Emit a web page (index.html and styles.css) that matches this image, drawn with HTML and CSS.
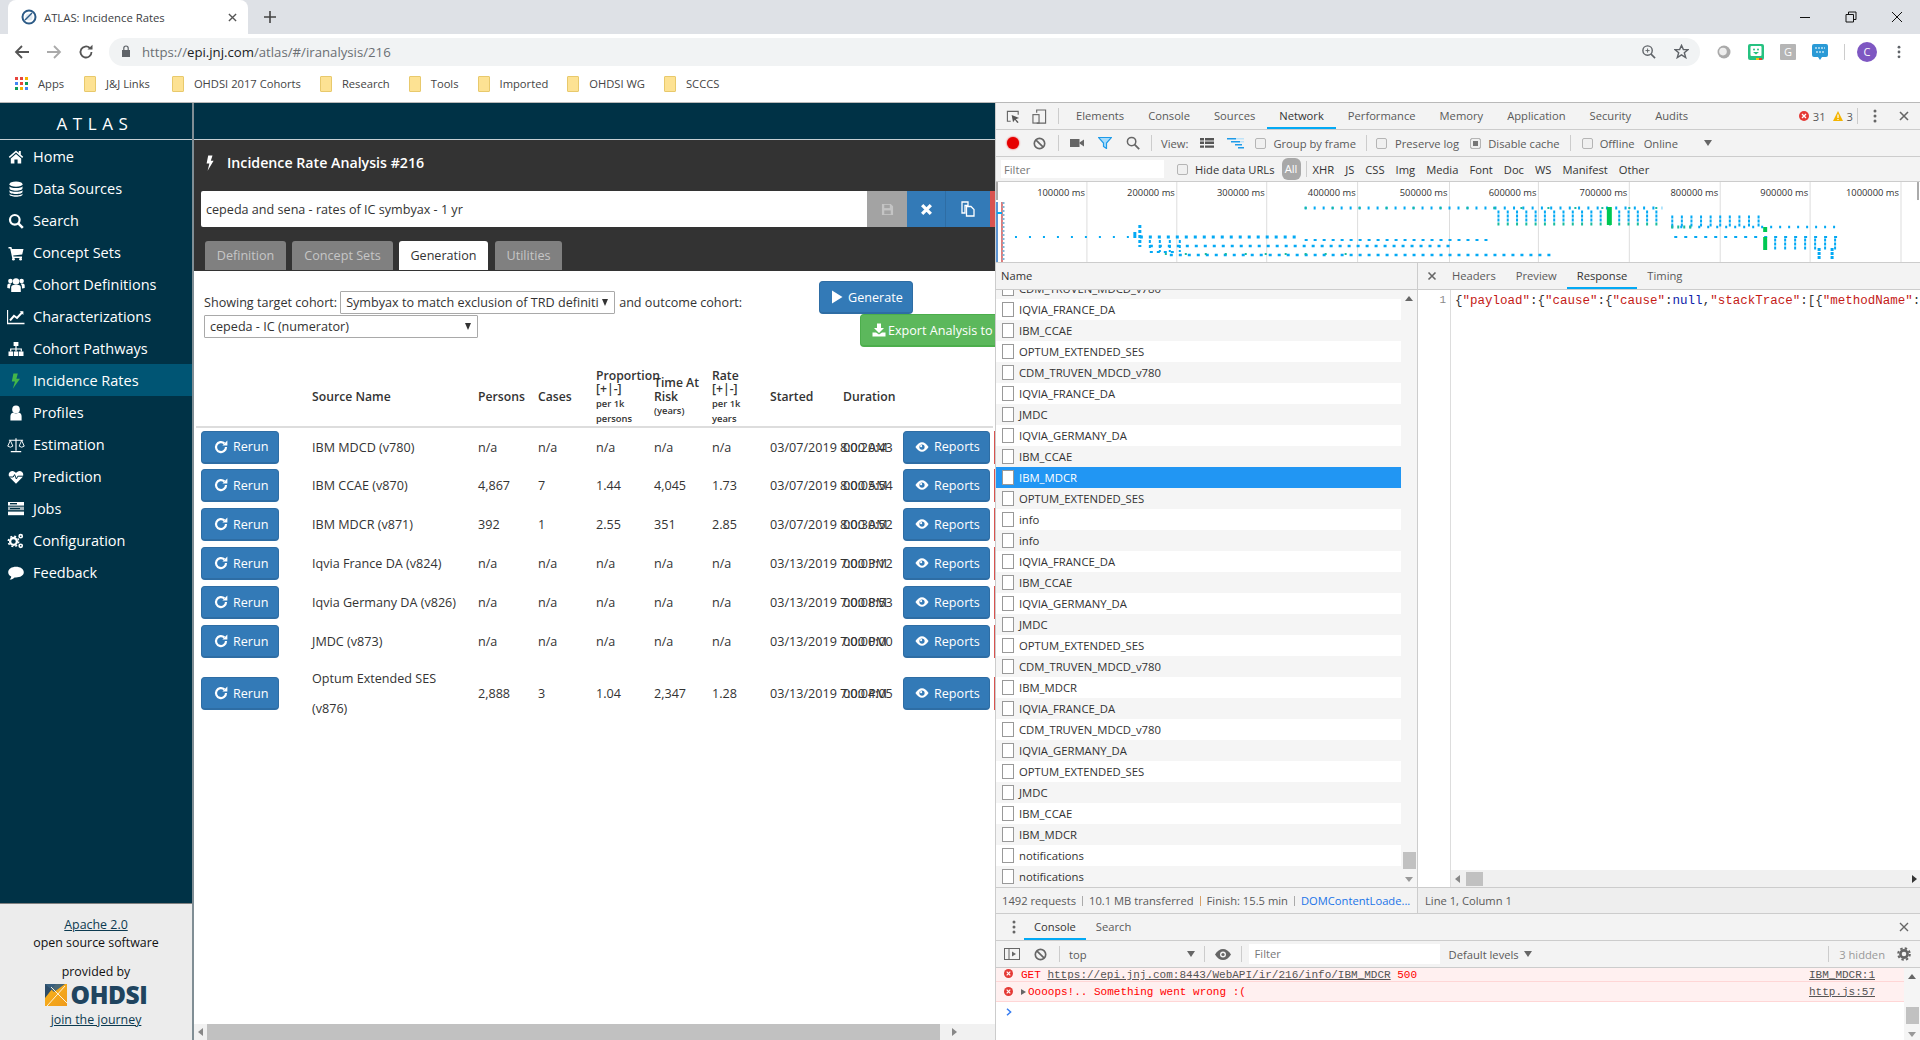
FILE: index.html
```html
<!DOCTYPE html>
<html lang="en">
<head>
<meta charset="utf-8">
<title>ATLAS: Incidence Rates</title>
<link rel="stylesheet" href="styles.css">
</head>
<body>
<header class="browser">
  <div class="tabstrip">
    <div class="tab">
      <svg class="favicon" viewBox="0 0 16 16"><circle cx="8" cy="8" r="6.5" fill="none" stroke="#2b5a86" stroke-width="2"/><circle cx="8" cy="8" r="3.6" fill="#dfe8f0"/><path d="M4 11 L11 4" stroke="#2b5a86" stroke-width="1.4"/></svg>
      <span class="tab-title">ATLAS: Incidence Rates</span>
      <svg class="tab-close" viewBox="0 0 10 10"><path d="M1 1L9 9M9 1L1 9" stroke="#555" stroke-width="1.5"/></svg>
    </div>
    <svg class="newtab" viewBox="0 0 12 12"><path d="M6 0V12M0 6H12" stroke="#444" stroke-width="1.6"/></svg>
    <div class="win-controls">
      <svg viewBox="0 0 12 12"><path d="M1 6.5H11" stroke="#111" stroke-width="1"/></svg>
      <svg viewBox="0 0 12 12"><path d="M3.5 3V1H11V8.5H9M1 3.5H8.5V11H1Z" fill="none" stroke="#111"/></svg>
      <svg viewBox="0 0 12 12"><path d="M1 1L11 11M11 1L1 11" stroke="#111"/></svg>
    </div>
  </div>
  <div class="toolbar">
    <svg class="nav-ic" viewBox="0 0 16 16"><path d="M15 8H2M8 2L2 8L8 14" fill="none" stroke="#555" stroke-width="1.8"/></svg>
    <svg class="nav-ic" viewBox="0 0 16 16"><path d="M1 8H14M8 2L14 8L8 14" fill="none" stroke="#aaa" stroke-width="1.8"/></svg>
    <svg class="nav-ic" viewBox="0 0 16 16"><path d="M13.5 8A5.5 5.5 0 1 1 11.8 4" fill="none" stroke="#555" stroke-width="1.8"/><path d="M9.5 5.5H14.5V0.8Z" fill="#555"/></svg>
    <div class="omnibox">
      <svg class="lock" viewBox="0 0 10 12"><path d="M1 5H9V12H1Z" fill="#5f6368"/><path d="M2.8 5V3.2A2.2 2.2 0 0 1 7.2 3.2V5" fill="none" stroke="#5f6368" stroke-width="1.2"/></svg>
      <span class="url"><span class="dim">https://</span>epi.jnj.com<span class="dim">/atlas/#/iranalysis/216</span></span>
      <svg class="omni-ic" viewBox="0 0 16 16"><circle cx="7" cy="7" r="5" fill="none" stroke="#5f6368" stroke-width="1.5"/><path d="M4.8 7H9.2M7 4.8V9.2" stroke="#5f6368"/><path d="M10.5 10.5L15 15" stroke="#5f6368" stroke-width="1.7"/></svg>
      <svg class="omni-ic" viewBox="0 0 16 16"><path d="M8 1.5L10 6H15L11 9.3L12.5 14.5L8 11.6L3.5 14.5L5 9.3L1 6H6Z" fill="none" stroke="#5f6368" stroke-width="1.5"/></svg>
    </div>
    <div class="ext">
      <svg viewBox="0 0 16 16"><circle cx="8" cy="8" r="6.5" fill="#aaa"/><circle cx="7" cy="7.6" r="3.8" fill="#eee"/></svg>
      <svg viewBox="0 0 16 16"><rect width="16" height="16" rx="2" fill="#26c281"/><rect x="2.5" y="2" width="11" height="10" rx="1" fill="#fff"/><circle cx="6" cy="5.5" r="1" fill="#26c281"/><circle cx="10" cy="5.5" r="1" fill="#26c281"/><path d="M5 8H11L8 10.5Z" fill="#26c281"/><rect x="8" y="14" width="3" height="2" fill="#f4c20d"/><rect x="11" y="14" width="3" height="2" fill="#db4437"/></svg>
      <span class="ext-g">G</span>
      <svg viewBox="0 0 16 16"><path d="M2 0H14Q16 0 16 2V11Q16 13 14 13H10L8 16L6 13H2Q0 13 0 11V2Q0 0 2 0Z" fill="#2a9ad6"/><path d="M3 4H13M4 8H12" stroke="#bfe3f5" stroke-width="1.6" stroke-dasharray="2 1"/></svg>
    </div>
    <span class="tool-sep"></span>
    <span class="avatar">C</span>
    <svg class="kebab" viewBox="0 0 4 16"><circle cx="2" cy="2.5" r="1.6" fill="#5f6368"/><circle cx="2" cy="8" r="1.6" fill="#5f6368"/><circle cx="2" cy="13.5" r="1.6" fill="#5f6368"/></svg>
  </div>
  <div class="bookmarks">
    <span class="bm bm-apps"><svg class="apps" viewBox="0 0 13 13"><g fill="#e8453c"><rect width="3" height="3"/><rect x="5" width="3" height="3"/></g><rect x="10" width="3" height="3" fill="#f4b400"/><g fill="#4285f4"><rect y="5" width="3" height="3"/></g><rect x="5" y="5" width="3" height="3" fill="#e8453c"/><rect x="10" y="5" width="3" height="3" fill="#0f9d58"/><rect y="10" width="3" height="3" fill="#0f9d58"/><rect x="5" y="10" width="3" height="3" fill="#f4b400"/><rect x="10" y="10" width="3" height="3" fill="#4285f4"/></svg>Apps</span>
    <span class="bm bm-jj"><i class="folder"></i>J&amp;J Links</span>
    <span class="bm"><i class="folder"></i>OHDSI 2017 Cohorts</span>
    <span class="bm"><i class="folder"></i>Research</span>
    <span class="bm"><i class="folder"></i>Tools</span>
    <span class="bm"><i class="folder"></i>Imported</span>
    <span class="bm"><i class="folder"></i>OHDSI WG</span>
    <span class="bm"><i class="folder"></i>SCCCS</span>
  </div>
</header>

<div class="viewport">
  <div class="atlas">
    <aside class="sidebar">
      <div class="brand">ATLAS</div>
      <nav class="nav">
        <a class="nav-item"><svg class="nav-svg" viewBox="0 0 16 16"><path d="M8 1.5L0.8 7.8L1.8 9L8 3.6L14.2 9L15.2 7.8L12.8 5.7V2H10.8V4Z"/><path d="M2.8 9.4L8 4.9L13.2 9.4V14.4H9.6V10.6H6.4V14.4H2.8Z"/></svg>Home</a>
        <a class="nav-item"><svg class="nav-svg" viewBox="0 0 16 16"><ellipse cx="8" cy="3.2" rx="6.5" ry="2.6"/><path d="M1.5 5V7.2C1.5 8.6 4.4 9.7 8 9.7S14.5 8.6 14.5 7.2V5C14.5 6.4 11.6 7 8 7S1.5 6.4 1.5 5Z"/><path d="M1.5 8.8V10.8C1.5 12.2 4.4 13 8 13S14.5 12.2 14.5 10.8V8.8C14.5 10.2 11.6 10.8 8 10.8S1.5 10.2 1.5 8.8Z"/><path d="M1.5 12.2V13.6C1.5 15 4.4 15.8 8 15.8S14.5 15 14.5 13.6V12.2C14.5 13.6 11.6 14.2 8 14.2S1.5 13.6 1.5 12.2Z"/></svg>Data Sources</a>
        <a class="nav-item"><svg class="nav-svg" viewBox="0 0 16 16"><circle cx="6.8" cy="6.8" r="4.8" fill="none" stroke="currentColor" stroke-width="2.2"/><path d="M10.3 10.3L14.8 14.8" stroke="currentColor" stroke-width="2.6"/></svg>Search</a>
        <a class="nav-item"><svg class="nav-svg" viewBox="0 0 16 16"><path d="M0.5 2H3.4L4 4H15.5L14.2 9.6L5.2 10.4L5.5 11.5H14V13H4.2L2.2 3.5H0.5Z"/><circle cx="5.4" cy="14.2" r="1.4"/><circle cx="12.6" cy="14.2" r="1.4"/></svg>Concept Sets</a>
        <a class="nav-item"><svg class="nav-svg" viewBox="0 0 18 16"><circle cx="9" cy="4.5" r="3.2"/><circle cx="3.4" cy="4" r="2.3"/><circle cx="14.6" cy="4" r="2.3"/><path d="M4.2 15V10.6Q4.2 8 6.6 8H11.4Q13.8 8 13.8 10.6V15Z"/><path d="M0.3 11V8.4Q0.3 6.6 2.3 6.6H4.3Q3 8 3 10.4V11.4Z"/><path d="M17.7 11V8.4Q17.7 6.6 15.7 6.6H13.7Q15 8 15 10.4V11.4Z"/></svg>Cohort Definitions</a>
        <a class="nav-item"><svg class="nav-svg" viewBox="0 0 18 16"><path d="M0.5 1V14.5H17.5" fill="none" stroke="currentColor" stroke-width="1.3"/><path d="M3 11.5L7 6.8L10 9L15.5 3" fill="none" stroke="currentColor" stroke-width="2"/><path d="M12.6 2.2H16.4V6Z"/></svg>Characterizations</a>
        <a class="nav-item"><svg class="nav-svg" viewBox="0 0 16 16"><rect x="5.6" y="1" width="4.8" height="4"/><rect x="0.5" y="10.5" width="4.5" height="4.5"/><rect x="5.8" y="10.5" width="4.5" height="4.5"/><rect x="11" y="10.5" width="4.5" height="4.5"/><path d="M8 5V8M2.7 10.5V8H13.3V10.5M8 8V10.5" fill="none" stroke="currentColor" stroke-width="1.2"/></svg>Cohort Pathways</a>
        <a class="nav-item nav-active"><svg class="nav-svg nav-bolt" viewBox="0 0 16 16"><path d="M9.8 0.5H5.4L3.8 8.4H7L4.8 15.8L12 5.8H8.4Z"/></svg>Incidence Rates</a>
        <a class="nav-item"><svg class="nav-svg" viewBox="0 0 16 16"><circle cx="8" cy="4.4" r="3.8"/><path d="M2.4 15.5V11.4Q2.4 8 5.4 7.4Q8 9.4 10.6 7.4Q13.6 8 13.6 11.4V15.5Z"/></svg>Profiles</a>
        <a class="nav-item"><svg class="nav-svg" viewBox="0 0 19 16"><path d="M9.5 1V14M4 15H15M2 3H17" fill="none" stroke="currentColor" stroke-width="1.2"/><path d="M3.5 3.2L0.8 9.2Q3.5 11.5 6.2 9.2ZM15.5 3.2L12.8 9.2Q15.5 11.5 18.2 9.2Z" fill="none" stroke="currentColor" stroke-width="1"/></svg>Estimation</a>
        <a class="nav-item"><svg class="nav-svg" viewBox="0 0 16 16"><path d="M8 14.8L1.8 8.6C-0.4 6 1 2 4.3 2C6 2 7.2 3 8 4C8.8 3 10 2 11.7 2C15 2 16.4 6 14.2 8.6Z"/><path d="M1 8H5.2L6.6 5.6L8.4 10L9.8 7.2H15" fill="none" stroke="#003246" stroke-width="1"/></svg>Prediction</a>
        <a class="nav-item"><svg class="nav-svg" viewBox="0 0 16 16"><rect y="1" width="16" height="3.6"/><rect y="5.6" width="16" height="3.6" opacity=".65"/><rect y="10.6" width="16" height="3.6"/><rect x="2" y="2" width="7" height="1.4" fill="#003246"/><rect x="2" y="7" width="10" height="1.2" fill="#003246"/></svg>Jobs</a>
        <a class="nav-item"><svg class="nav-svg" viewBox="0 0 17 16"><circle cx="6" cy="8.4" r="3.4" fill="none" stroke="currentColor" stroke-width="2.3"/><circle cx="6" cy="8.4" r="5.2" fill="none" stroke="currentColor" stroke-width="1.5" stroke-dasharray="2 2.1"/><circle cx="13.2" cy="3.2" r="1.6" fill="none" stroke="currentColor" stroke-width="1.6"/><circle cx="13.2" cy="12.8" r="1.6" fill="none" stroke="currentColor" stroke-width="1.6"/></svg>Configuration</a>
        <a class="nav-item"><svg class="nav-svg" viewBox="0 0 16 16"><path d="M8 1.8C12.2 1.8 15.8 4 15.8 7.2S12.2 12.4 8 12.4H6.6C5.6 13.6 3.8 14.6 1.6 14.6C2.8 13.4 3.2 12.4 3.2 11.4C1.2 10.6 0.2 9 0.2 7.2C0.2 4 3.8 1.8 8 1.8Z"/></svg>Feedback</a>
      </nav>
      <footer class="side-foot">
        <a class="foot-link">Apache 2.0</a>
        <span>open source software</span>
        <span class="provided">provided by</span>
        <span class="ohdsi">
          <svg class="ohdsi-mark" viewBox="0 0 22 22"><defs><linearGradient id="og" x1="0" y1="0" x2="1" y2="1"><stop offset="0" stop-color="#f9b51c"/><stop offset="1" stop-color="#ef9a1a"/></linearGradient></defs><rect width="22" height="22" fill="url(#og)"/><path d="M0 0H11L0 14Z" fill="#2c4c68"/><path d="M0 0H8L20 0 9 8Z" fill="#39607f" opacity=".9"/><path d="M2 22L20 2M6 3L22 19" stroke="#fff2d8" stroke-width="1"/></svg>
          <b class="ohdsi-word">OHDSI</b>
        </span>
        <a class="foot-link">join the journey</a>
      </footer>
    </aside>

    <main class="main">
      <div class="main-scroll">
        <div class="topbar"></div>
        <section class="page-head">
          <h1 class="page-title"><svg class="title-bolt" viewBox="0 0 10 16"><path d="M7.5 0.5H3.2L1.6 8.4H4.4L2.6 15.8L8.6 5.8H5.8Z" fill="#fff"/></svg>Incidence Rate Analysis #216</h1>
          <div class="name-row">
            <div class="name-input">cepeda and sena - rates of IC symbyax - 1 yr</div>
            <span class="nbtn nbtn-save"><svg class="nic" viewBox="0 0 14 14"><path d="M1 1H10.5L13 3.5V13H1Z" fill="#c4c4c4"/><rect x="3.5" y="2" width="6" height="3.5" fill="#a3a3a3"/><rect x="3.5" y="8" width="7" height="4" fill="#a3a3a3"/></svg></span>
            <span class="nbtn nbtn-x"><svg class="nic" viewBox="0 0 12 12"><path d="M2 2L10 10M10 2L2 10" stroke="#fff" stroke-width="3"/></svg></span>
            <span class="nbtn nbtn-copy"><svg class="nic nic-lg" viewBox="0 0 16 16"><path d="M2 1H8V4.5H5V12H2Z" fill="none" stroke="#fff" stroke-width="1.3"/><path d="M6.5 5.5H11L14 8.5V15H6.5Z" fill="none" stroke="#fff" stroke-width="1.3"/></svg></span>
            <span class="nbtn nbtn-del"></span>
          </div>
          <div class="tabs">
            <span class="ptab ptab-1">Definition</span>
            <span class="ptab ptab-2">Concept Sets</span>
            <span class="ptab ptab-3 ptab-on">Generation</span>
            <span class="ptab ptab-4">Utilities</span>
          </div>
        </section>

        <section class="gen-head">
          <div class="filters">
            <div class="filter-line">
              <span>Showing target cohort:</span>
              <span class="sel sel-a"><span class="sel-text">Symbyax to match exclusion of TRD definiti</span><i class="sel-arrow"></i></span>
              <span>and outcome cohort:</span>
            </div>
            <div class="filter-line">
              <span class="sel sel-b"><span class="sel-text">cepeda - IC (numerator)</span><i class="sel-arrow"></i></span>
            </div>
          </div>
          <div class="gen-actions">
            <span class="btn btn-gen"><svg class="bic bic-play" viewBox="0 0 12 14"><path d="M1 0.5L11.5 7L1 13.5Z" fill="#fff"/></svg>Generate</span>
            <span class="btn btn-exp"><svg class="bic" viewBox="0 0 14 14"><path d="M5 0.5H9V5H12L7 10L2 5H5Z" fill="#fff"/><path d="M0.5 9.5H4L7 11.5L10 9.5H13.5V13.5H0.5Z" fill="#fff"/></svg>Export Analysis to</span>
          </div>
        </section>

        <table class="gen-table">
          <colgroup><col class="c1"><col class="c2"><col class="c3"><col class="c4"><col class="c5"><col class="c6"><col class="c7"><col class="c8"><col class="c9"><col class="c10"></colgroup>
          <thead>
            <tr>
              <th></th><th>Source Name</th><th>Persons</th><th>Cases</th>
              <th>Proportion<br>[+|-]<br><small>per 1k<br>persons</small></th>
              <th>Time At<br>Risk<br><small>(years)</small></th>
              <th>Rate<br>[+|-]<br><small>per 1k<br>years</small></th>
              <th>Started</th><th>Duration</th><th></th>
            </tr>
          </thead>
          <tbody>
            <tr><td><span class="btn btn-row btn-rerun"><svg class="bic bic-re" viewBox="0 0 14 14"><path d="M12 7A5 5 0 1 1 10.4 3.4" fill="none" stroke="#fff" stroke-width="2.2"/><path d="M8.4 5.6H13.4V0.6Z" fill="#fff"/></svg>Rerun</span></td><td>IBM MDCD (v780)</td><td>n/a</td><td>n/a</td><td>n/a</td><td>n/a</td><td>n/a</td><td>03/07/2019 8:00 AM</td><td>00:20:43</td><td><div class="row-actions"><span class="btn btn-row btn-rep"><svg class="bic" viewBox="0 0 16 14"><path d="M0.5 7Q4 1.5 8 1.5T15.5 7Q12 12.5 8 12.5T0.5 7Z" fill="#fff"/><circle cx="8" cy="7" r="3" fill="#337ab7"/><circle cx="7" cy="6" r="1.2" fill="#fff"/></svg>Reports</span><span class="btn-sliver"></span></div></td></tr>
            <tr><td><span class="btn btn-row btn-rerun"><svg class="bic bic-re" viewBox="0 0 14 14"><path d="M12 7A5 5 0 1 1 10.4 3.4" fill="none" stroke="#fff" stroke-width="2.2"/><path d="M8.4 5.6H13.4V0.6Z" fill="#fff"/></svg>Rerun</span></td><td>IBM CCAE (v870)</td><td>4,867</td><td>7</td><td>1.44</td><td>4,045</td><td>1.73</td><td>03/07/2019 8:00 AM</td><td>00:05:54</td><td><div class="row-actions"><span class="btn btn-row btn-rep"><svg class="bic" viewBox="0 0 16 14"><path d="M0.5 7Q4 1.5 8 1.5T15.5 7Q12 12.5 8 12.5T0.5 7Z" fill="#fff"/><circle cx="8" cy="7" r="3" fill="#337ab7"/><circle cx="7" cy="6" r="1.2" fill="#fff"/></svg>Reports</span><span class="btn-sliver"></span></div></td></tr>
            <tr><td><span class="btn btn-row btn-rerun"><svg class="bic bic-re" viewBox="0 0 14 14"><path d="M12 7A5 5 0 1 1 10.4 3.4" fill="none" stroke="#fff" stroke-width="2.2"/><path d="M8.4 5.6H13.4V0.6Z" fill="#fff"/></svg>Rerun</span></td><td>IBM MDCR (v871)</td><td>392</td><td>1</td><td>2.55</td><td>351</td><td>2.85</td><td>03/07/2019 8:00 AM</td><td>00:30:52</td><td><div class="row-actions"><span class="btn btn-row btn-rep"><svg class="bic" viewBox="0 0 16 14"><path d="M0.5 7Q4 1.5 8 1.5T15.5 7Q12 12.5 8 12.5T0.5 7Z" fill="#fff"/><circle cx="8" cy="7" r="3" fill="#337ab7"/><circle cx="7" cy="6" r="1.2" fill="#fff"/></svg>Reports</span><span class="btn-sliver"></span></div></td></tr>
            <tr><td><span class="btn btn-row btn-rerun"><svg class="bic bic-re" viewBox="0 0 14 14"><path d="M12 7A5 5 0 1 1 10.4 3.4" fill="none" stroke="#fff" stroke-width="2.2"/><path d="M8.4 5.6H13.4V0.6Z" fill="#fff"/></svg>Rerun</span></td><td>Iqvia France DA (v824)</td><td>n/a</td><td>n/a</td><td>n/a</td><td>n/a</td><td>n/a</td><td>03/13/2019 7:00 PM</td><td>00:03:12</td><td><div class="row-actions"><span class="btn btn-row btn-rep"><svg class="bic" viewBox="0 0 16 14"><path d="M0.5 7Q4 1.5 8 1.5T15.5 7Q12 12.5 8 12.5T0.5 7Z" fill="#fff"/><circle cx="8" cy="7" r="3" fill="#337ab7"/><circle cx="7" cy="6" r="1.2" fill="#fff"/></svg>Reports</span><span class="btn-sliver"></span></div></td></tr>
            <tr><td><span class="btn btn-row btn-rerun"><svg class="bic bic-re" viewBox="0 0 14 14"><path d="M12 7A5 5 0 1 1 10.4 3.4" fill="none" stroke="#fff" stroke-width="2.2"/><path d="M8.4 5.6H13.4V0.6Z" fill="#fff"/></svg>Rerun</span></td><td>Iqvia Germany DA (v826)</td><td>n/a</td><td>n/a</td><td>n/a</td><td>n/a</td><td>n/a</td><td>03/13/2019 7:00 PM</td><td>00:08:53</td><td><div class="row-actions"><span class="btn btn-row btn-rep"><svg class="bic" viewBox="0 0 16 14"><path d="M0.5 7Q4 1.5 8 1.5T15.5 7Q12 12.5 8 12.5T0.5 7Z" fill="#fff"/><circle cx="8" cy="7" r="3" fill="#337ab7"/><circle cx="7" cy="6" r="1.2" fill="#fff"/></svg>Reports</span><span class="btn-sliver"></span></div></td></tr>
            <tr><td><span class="btn btn-row btn-rerun"><svg class="bic bic-re" viewBox="0 0 14 14"><path d="M12 7A5 5 0 1 1 10.4 3.4" fill="none" stroke="#fff" stroke-width="2.2"/><path d="M8.4 5.6H13.4V0.6Z" fill="#fff"/></svg>Rerun</span></td><td>JMDC (v873)</td><td>n/a</td><td>n/a</td><td>n/a</td><td>n/a</td><td>n/a</td><td>03/13/2019 7:00 PM</td><td>00:00:00</td><td><div class="row-actions"><span class="btn btn-row btn-rep"><svg class="bic" viewBox="0 0 16 14"><path d="M0.5 7Q4 1.5 8 1.5T15.5 7Q12 12.5 8 12.5T0.5 7Z" fill="#fff"/><circle cx="8" cy="7" r="3" fill="#337ab7"/><circle cx="7" cy="6" r="1.2" fill="#fff"/></svg>Reports</span><span class="btn-sliver"></span></div></td></tr>
            <tr class="row-tall"><td><span class="btn btn-row btn-rerun"><svg class="bic bic-re" viewBox="0 0 14 14"><path d="M12 7A5 5 0 1 1 10.4 3.4" fill="none" stroke="#fff" stroke-width="2.2"/><path d="M8.4 5.6H13.4V0.6Z" fill="#fff"/></svg>Rerun</span></td><td class="wrap">Optum Extended SES (v876)</td><td>2,888</td><td>3</td><td>1.04</td><td>2,347</td><td>1.28</td><td>03/13/2019 7:00 PM</td><td>00:04:05</td><td><div class="row-actions"><span class="btn btn-row btn-rep"><svg class="bic" viewBox="0 0 16 14"><path d="M0.5 7Q4 1.5 8 1.5T15.5 7Q12 12.5 8 12.5T0.5 7Z" fill="#fff"/><circle cx="8" cy="7" r="3" fill="#337ab7"/><circle cx="7" cy="6" r="1.2" fill="#fff"/></svg>Reports</span><span class="btn-sliver"></span></div></td></tr>
          </tbody>
        </table>
      </div>
      <div class="hscroll">
        <i class="arr arr-l"></i>
        <span class="hthumb"></span>
        <i class="arr arr-r"></i>
      </div>
    </main>
  </div>

  <div class="devtools">
    <div class="dt-row dt-tabs">
      <svg class="dic" viewBox="0 0 16 16"><path d="M5 13H1.5V2.5H13V6" fill="none" stroke="#666" stroke-width="1.2"/><path d="M6 6.5L14 9.5L10.5 10.8L13.5 14L12 15L9.5 11.5L7.5 14Z" fill="#555"/></svg>
      <svg class="dic" viewBox="0 0 16 16"><path d="M5 4V1H14.5V15H5" fill="none" stroke="#666" stroke-width="1.2"/><rect x="1" y="6" width="6.5" height="9" fill="none" stroke="#666" stroke-width="1.2"/></svg>
      <span class="vsep vsep-tabs"></span>
      <span class="dtab">Elements</span>
      <span class="dtab">Console</span>
      <span class="dtab">Sources</span>
      <span class="dtab dtab-on">Network</span>
      <span class="dtab">Performance</span>
      <span class="dtab">Memory</span>
      <span class="dtab">Application</span>
      <span class="dtab">Security</span>
      <span class="dtab">Audits</span>
      <span class="dt-spacer"></span>
      <svg class="mini" viewBox="0 0 10 10"><circle cx="5" cy="5" r="5" fill="#e53935"/><path d="M3 3L7 7M7 3L3 7" stroke="#fff" stroke-width="1.3"/></svg>
      <span class="cnt">31</span>
      <svg class="mini mini-w" viewBox="0 0 10 10"><path d="M5 0L10 10H0Z" fill="#f4b400"/><path d="M5 3.5V7M5 8V9" stroke="#fff" stroke-width="1.2"/></svg>
      <span class="cnt">3</span>
      <span class="vsep vsep-cnt"></span>
      <svg class="dots" viewBox="0 0 4 14"><circle cx="2" cy="2" r="1.5" fill="#666"/><circle cx="2" cy="7" r="1.5" fill="#666"/><circle cx="2" cy="12" r="1.5" fill="#666"/></svg>
      <svg class="dt-close" viewBox="0 0 10 10"><path d="M1 1L9 9M9 1L1 9" stroke="#666" stroke-width="1.6"/></svg>
    </div>

    <div class="dt-row dt-toolbar">
      <span class="rec"></span>
      <svg class="dic dic-stop" viewBox="0 0 14 14"><circle cx="7" cy="7" r="5.6" fill="none" stroke="#666" stroke-width="1.8"/><path d="M3 3L11 11" stroke="#666" stroke-width="1.8"/></svg>
      <span class="vsep vsep-a"></span>
      <svg class="dic dic-vid" viewBox="0 0 14 10"><rect y="1" width="9.5" height="8" fill="#666"/><path d="M9.5 4.5L14 1.5V8.5L9.5 5.5Z" fill="#666"/></svg>
      <svg class="dic dic-flt" viewBox="0 0 14 12"><path d="M0.5 0.5H13.5L8.5 6V11.5L5.5 9.5V6Z" fill="#a8dcfb" stroke="#1e9be9" stroke-width="1.2"/></svg>
      <svg class="dic dic-srch" viewBox="0 0 14 14"><circle cx="5.6" cy="5.6" r="4.2" fill="none" stroke="#666" stroke-width="1.5"/><path d="M8.7 8.7L13.2 13.2" stroke="#666" stroke-width="1.8"/></svg>
      <span class="vsep vsep-b"></span>
      <span class="tb-text tb-view">View:</span>
      <svg class="dic dic-list" viewBox="0 0 14 10"><path d="M0 0H4V2.4H0ZM5 0H14V2.4H5ZM0 3.6H4V6H0ZM5 3.6H14V6H5ZM0 7.4H4V9.8H0ZM5 7.4H14V9.8H5Z" fill="#555"/></svg>
      <svg class="dic dic-wf" viewBox="0 0 17 11"><path d="M0 0H9V1.6H0ZM4 3H13V4.6H4ZM8 6H15V7.6H8ZM11 9H17V10.6H11Z" fill="#1e9be9"/><path d="M9 0H17V1.6H9ZM13 3H17V4.6H13Z" fill="#bfe3f8"/></svg>
      <i class="cb cb-1"></i><span class="tb-text tb-group">Group by frame</span>
      <span class="vsep vsep-c"></span>
      <i class="cb cb-2"></i><span class="tb-text tb-pres">Preserve log</span>
      <i class="cb cb-3 cb-on"></i><span class="tb-text tb-dis">Disable cache</span>
      <span class="vsep vsep-d"></span>
      <i class="cb cb-4"></i><span class="tb-text tb-off">Offline</span>
      <span class="tb-text tb-on">Online</span>
      <i class="tri tri-on"></i>
    </div>

    <div class="dt-row dt-filter">
      <span class="flt-input">Filter</span>
      <i class="cb cb-5"></i><span class="ft-text ft-hide">Hide data URLs</span>
      <span class="pill">All</span>
      <span class="vsep vsep-e"></span>
      <span class="ft-text ft-x">XHR</span><span class="ft-text ft-x">JS</span><span class="ft-text ft-x">CSS</span><span class="ft-text ft-x">Img</span><span class="ft-text ft-x">Media</span><span class="ft-text ft-x">Font</span><span class="ft-text ft-x">Doc</span><span class="ft-text ft-x">WS</span><span class="ft-text ft-x">Manifest</span><span class="ft-text ft-x">Other</span>
    </div>

    <div class="overview">
      <svg class="ov-svg" viewBox="0 0 925 80">
        <g class="ov-grid"><path d="M92 0V80M182 0V80M272 0V80M363 0V80M455 0V80M544 0V80M635 0V80M726 0V80M816 0V80M907 0V80"/></g>
        <g class="ov-labels">
          <text x="90" y="14">100000 ms</text><text x="180" y="14">200000 ms</text><text x="270" y="14">300000 ms</text><text x="361" y="14">400000 ms</text><text x="453" y="14">500000 ms</text><text x="542" y="14">600000 ms</text><text x="633" y="14">700000 ms</text><text x="724" y="14">800000 ms</text><text x="814" y="14">900000 ms</text><text x="905" y="14">1000000 ms</text>
        </g>
        <rect x="1" y="0" width="2" height="18" fill="#aaa"/>
        <rect x="923" y="0" width="2" height="18" fill="#aaa"/>
        <path d="M2 20V80" stroke="#1565c0" stroke-width="1.4"/>
        <path d="M7 20V80" stroke="#c62828" stroke-width="1.2"/>
        <path d="M8.5 20V80" stroke="#7cb8d8" stroke-width="2" stroke-dasharray="2 2"/>
        <path d="M2 31H7" stroke="#03a9f4" stroke-width="2"/>
        <g class="ov-a">
          <path d="M310 26H500" stroke-width="3" stroke-dasharray="2 7"/>
          <path d="M500 26H668" stroke-width="3" stroke-dasharray="2 7.3"/>
          <path d="M503 30H670M503 34H670M503 38H670" stroke-width="3" stroke-dasharray="2 7.3"/>
          <path d="M677 35H770M677 39H770M677 43H770" stroke-width="3" stroke-dasharray="2 7.6"/>
          <path d="M677 45H845" stroke-width="2.4" stroke-dasharray="2 7"/>
          <path d="M20 55H135" stroke-width="2" stroke-dasharray="2 12"/>
          <path d="M145 55H305" stroke-width="3" stroke-dasharray="3 6"/>
          <path d="M310 58H495" stroke-width="2" stroke-dasharray="3 6"/>
          <path d="M155 64H455" stroke-width="2.4" stroke-dasharray="3 6"/>
          <path d="M175 73H560" stroke-width="2.4" stroke-dasharray="3 6"/>
          <path d="M155 70H180" stroke-width="2" stroke-dasharray="3 4"/>
          <path d="M680 55H850" stroke-width="2" stroke-dasharray="3 7"/>
          <path d="M770 58H845M770 62H845M770 66H845" stroke-width="3" stroke-dasharray="2 8"/>
          <path d="M145 43V65" stroke-width="3" stroke-dasharray="3 2"/>
          <path d="M140 50V56" stroke-width="3"/>
          <path d="M155 58V66M165 58V70M175 58V70M185 58V70" stroke-width="2" stroke-dasharray="3 2"/>
          <path d="M825 66V78M838 66V78" stroke-width="3" stroke-dasharray="3 1"/>
        </g>
        <g class="ov-b">
          <path d="M503 42H670" stroke-width="3" stroke-dasharray="2 7.3"/>
          <path d="M310 26H668" stroke-width="2" stroke-dasharray="2 25"/>
          <path d="M170 72H360" stroke-width="2" stroke-dasharray="2 18"/>
          <path d="M677 45H700" stroke-width="3" stroke-dasharray="2 4"/>
        </g>
        <g class="ov-c">
          <path d="M615 25V43" stroke-width="5"/>
          <path d="M771 45V50M771 55V68" stroke-width="4"/>
        </g>
      </svg>
    </div>

    <div class="net">
      <div class="net-list">
        <div class="net-head">Name</div>
        <div class="net-body">
          <div class="rows">
            <div class="rq rq-g"><i class="fi"></i>CDM_TRUVEN_MDCD_v780</div>
            <div class="rq"><i class="fi"></i>IQVIA_FRANCE_DA</div>
            <div class="rq rq-g"><i class="fi"></i>IBM_CCAE</div>
            <div class="rq"><i class="fi"></i>OPTUM_EXTENDED_SES</div>
            <div class="rq rq-g"><i class="fi"></i>CDM_TRUVEN_MDCD_v780</div>
            <div class="rq"><i class="fi"></i>IQVIA_FRANCE_DA</div>
            <div class="rq rq-g"><i class="fi"></i>JMDC</div>
            <div class="rq"><i class="fi"></i>IQVIA_GERMANY_DA</div>
            <div class="rq rq-g"><i class="fi"></i>IBM_CCAE</div>
            <div class="rq rq-sel"><i class="fi"></i>IBM_MDCR</div>
            <div class="rq rq-g"><i class="fi"></i>OPTUM_EXTENDED_SES</div>
            <div class="rq"><i class="fi"></i>info</div>
            <div class="rq rq-g"><i class="fi"></i>info</div>
            <div class="rq"><i class="fi"></i>IQVIA_FRANCE_DA</div>
            <div class="rq rq-g"><i class="fi"></i>IBM_CCAE</div>
            <div class="rq"><i class="fi"></i>IQVIA_GERMANY_DA</div>
            <div class="rq rq-g"><i class="fi"></i>JMDC</div>
            <div class="rq"><i class="fi"></i>OPTUM_EXTENDED_SES</div>
            <div class="rq rq-g"><i class="fi"></i>CDM_TRUVEN_MDCD_v780</div>
            <div class="rq"><i class="fi"></i>IBM_MDCR</div>
            <div class="rq rq-g"><i class="fi"></i>IQVIA_FRANCE_DA</div>
            <div class="rq"><i class="fi"></i>CDM_TRUVEN_MDCD_v780</div>
            <div class="rq rq-g"><i class="fi"></i>IQVIA_GERMANY_DA</div>
            <div class="rq"><i class="fi"></i>OPTUM_EXTENDED_SES</div>
            <div class="rq rq-g"><i class="fi"></i>JMDC</div>
            <div class="rq"><i class="fi"></i>IBM_CCAE</div>
            <div class="rq rq-g"><i class="fi"></i>IBM_MDCR</div>
            <div class="rq"><i class="fi"></i>notifications</div>
            <div class="rq rq-g"><i class="fi"></i>notifications</div>
          </div>
          <div class="vscroll vscroll-net"><i class="arr arr-u"></i><span class="vthumb vthumb-net"></span><i class="arr arr-d"></i></div>
        </div>
      </div>
      <div class="net-detail">
        <div class="detail-head">
          <svg class="det-x" viewBox="0 0 10 10"><path d="M1.5 1.5L8.5 8.5M8.5 1.5L1.5 8.5" stroke="#666" stroke-width="1.6"/></svg>
          <span class="dtab">Headers</span><span class="dtab">Preview</span><span class="dtab dtab-on">Response</span><span class="dtab">Timing</span>
        </div>
        <div class="code">
          <div class="gutter">1</div>
          <div class="code-body">
            <div class="code-line">{<span class="s">"payload"</span>:{<span class="s">"cause"</span>:{<span class="s">"cause"</span>:<span class="k">null</span>,<span class="s">"stackTrace"</span>:[{<span class="s">"methodName"</span>:<span class="s">"execute"</span></div>
            <div class="code-hs"><i class="arr arr-l"></i><span class="code-thumb"></span><i class="arr arr-r arr-dark"></i></div>
          </div>
        </div>
      </div>
    </div>

    <div class="status">
      <div class="status-l"><span>1492 requests</span><i class="st-sep"></i><span>10.1 MB transferred</span><i class="st-sep st-sep-o"></i><span>Finish: 15.5 min</span><i class="st-sep"></i><span class="st-blue">DOMContentLoade...</span></div>
      <div class="status-r">Line 1, Column 1</div>
    </div>

    <div class="drawer-tabs">
      <svg class="dots dots-d" viewBox="0 0 4 14"><circle cx="2" cy="2" r="1.5" fill="#666"/><circle cx="2" cy="7" r="1.5" fill="#666"/><circle cx="2" cy="12" r="1.5" fill="#666"/></svg>
      <span class="dtab dtab-on">Console</span><span class="dtab">Search</span>
      <span class="dt-spacer"></span>
      <svg class="dt-close" viewBox="0 0 10 10"><path d="M1 1L9 9M9 1L1 9" stroke="#666" stroke-width="1.4"/></svg>
    </div>
    <div class="drawer-bar">
      <svg class="dic dic-side" viewBox="0 0 16 14"><rect x="0.5" y="1.5" width="15" height="11" fill="none" stroke="#666"/><path d="M5 1.5V12.5" stroke="#666"/><path d="M8 4.5L12 7L8 9.5Z" fill="#666"/></svg>
      <svg class="dic dic-stop2" viewBox="0 0 14 14"><circle cx="7" cy="7" r="5.6" fill="none" stroke="#666" stroke-width="1.8"/><path d="M3 3L11 11" stroke="#666" stroke-width="1.8"/></svg>
      <span class="vsep vsep-f"></span>
      <span class="tb-text tb-top">top</span>
      <i class="tri tri-top"></i>
      <span class="vsep vsep-g"></span>
      <svg class="dic dic-eye" viewBox="0 0 16 11"><path d="M0 5.5Q3.5 0 8 0T16 5.5Q12.5 11 8 11T0 5.5Z" fill="#666"/><circle cx="8" cy="5.5" r="3" fill="#f3f3f3"/><circle cx="8" cy="5.5" r="1.6" fill="#666"/></svg>
      <span class="vsep vsep-h"></span>
      <span class="con-input">Filter</span>
      <span class="tb-text tb-lvl">Default levels</span>
      <i class="tri tri-lvl"></i>
      <span class="dt-spacer"></span>
      <span class="vsep vsep-i"></span>
      <span class="tb-text tb-hid">3 hidden</span>
      <svg class="dic dic-gear" viewBox="0 0 14 14"><circle cx="7" cy="7" r="3.6" fill="none" stroke="#666" stroke-width="2.6"/><circle cx="7" cy="7" r="5.8" fill="none" stroke="#666" stroke-width="2" stroke-dasharray="2.4 2.16"/></svg>
    </div>
    <div class="console">
      <div class="con-msgs">
        <div class="msg msg-first">
          <svg class="err" viewBox="0 0 10 10"><circle cx="5" cy="5" r="5" fill="#e53935"/><path d="M3 3L7 7M7 3L3 7" stroke="#fff" stroke-width="1.3"/></svg>
          <span class="msg-text">GET <span class="u">https://epi.jnj.com:8443/WebAPI/ir/216/info/IBM_MDCR</span> 500</span>
          <span class="msg-src">IBM_MDCR:1</span>
        </div>
        <div class="msg">
          <svg class="err" viewBox="0 0 10 10"><circle cx="5" cy="5" r="5" fill="#e53935"/><path d="M3 3L7 7M7 3L3 7" stroke="#fff" stroke-width="1.3"/></svg>
          <i class="tri-r"></i>
          <span class="msg-text msg-ooops">Oooops!.. Something went wrong :(</span>
          <span class="msg-src">http.js:57</span>
        </div>
        <div class="prompt"><svg class="prompt-ic" viewBox="0 0 6 8"><path d="M1 0.8L4.6 4L1 7.2" fill="none" stroke="#367cf1" stroke-width="1.5"/></svg></div>
      </div>
      <div class="vscroll vscroll-con"><i class="arr arr-u"></i><span class="vthumb vthumb-con"></span><i class="arr arr-d"></i></div>
    </div>
  </div>
</div>
</body>
</html>
```

FILE: styles.css
```css
* { box-sizing: border-box; }
html, body { margin: 0; height: 1040px; overflow: hidden; }
body { display: flex; flex-direction: column; width: 1920px; font-family: "Open Sans", sans-serif; font-size: 13px; color: #333; background: #fff; }
svg { display: block; flex: none; }

/* browser chrome */
.browser { flex: none; height: 103px; border-bottom: 1px solid #b9b9b9; font-size: 12px; }
.tabstrip { height: 34px; background: #dee1e6; display: flex; align-items: center; padding-left: 8px; }
.tab { width: 240px; height: 34px; background: #fff; border-radius: 8px 8px 0 0; display: flex; align-items: center; padding-left: 13px; }
.favicon { width: 16px; height: 16px; margin-right: 7px; }
.tab-title { font-size: 11.3px; color: #3c4043; width: 181px; white-space: nowrap; }
.tab-close { width: 9px; height: 9px; margin-left: 3px; }
.newtab { width: 12px; height: 12px; margin-left: 16px; }
.win-controls { margin-left: auto; display: flex; gap: 34px; padding-right: 17px; }
.win-controls svg { width: 12px; height: 12px; }
.toolbar { height: 35px; display: flex; align-items: center; padding-left: 14px; }
.nav-ic { width: 16px; height: 16px; margin-right: 16px; }
.nav-ic:nth-child(3) { margin-right: 15px; }
.omnibox { width: 1591px; height: 28px; border-radius: 14px; background: #f1f3f4; display: flex; align-items: center; padding-left: 10px; }
.lock { width: 10px; height: 12px; margin-right: 11px; margin-left: 2px; margin-bottom: 2px; }
.url { font-size: 13.2px; color: #202124; white-space: nowrap; flex: 1; }
.dim { color: #6b6f73; }
.omni-ic { width: 15px; height: 15px; margin-right: 18px; }
.omni-ic:last-child { margin-right: 11px; }
.ext { display: flex; gap: 16px; margin-left: 16px; align-items: center; }
.ext svg, .ext-g { width: 16px; height: 16px; }
.ext-g { background: #b5b5b5; color: #fff; border-radius: 1px; font-size: 11px; line-height: 16px; text-align: center; }
.tool-sep { width: 1px; height: 16px; background: #ccc; margin-left: 16px; }
.avatar { width: 20px; height: 20px; margin-left: 12px; border-radius: 50%; background: #7e57c2; color: #fff; font-size: 11px; line-height: 20px; text-align: center; }
.kebab { width: 4px; height: 14px; margin-left: 20px; }
.bookmarks { height: 33px; display: flex; align-items: center; padding-left: 15px; gap: 19px; padding-bottom: 4px; }
.bm { display: flex; align-items: center; color: #444; font-size: 11.2px; white-space: nowrap; }
.bm-apps { margin-right: 1px; }
.bm-jj { padding-right: 3px; }
.apps { width: 13px; height: 13px; margin-right: 10px; }
.folder { display: block; width: 12px; height: 16px; background: #fde293; border: 1px solid #e8c96c; border-radius: 1px; margin-right: 10px; }

/* viewport */
.viewport { flex: 1; display: flex; min-height: 0; }
.atlas { width: 995px; flex: none; display: flex; min-height: 0; }

/* sidebar */
.sidebar { width: 194px; flex: none; background: #003246; border-right: 2px solid #808e95; display: flex; flex-direction: column; }
.brand { height: 37px; border-bottom: 1px solid #c5cfd3; color: #fff; font-size: 17px; letter-spacing: 5.6px; text-align: center; line-height: 41px; padding-right: 2px; }
.nav { flex: 1; }
.nav-item { height: 32px; display: flex; align-items: center; color: #fff; font-size: 14.5px; padding-left: 7px; padding-top: 1px; white-space: nowrap; }
.nav-svg { width: 18px; height: 16px; margin-right: 8px; fill: currentColor; color: #fff; }
.nav-active { background: #005574; }
.nav-bolt { color: #43b649; }
.side-foot { height: 137px; background: #ececec; border-top: 1px solid #808080; display: flex; flex-direction: column; align-items: center; color: #111; font-size: 12.4px; line-height: 18px; padding-top: 12px; }
.foot-link { color: #0c3a50; text-decoration: underline; }
.provided { margin-top: 11px; }
.ohdsi { display: flex; align-items: center; height: 22px; margin: 3px 0 5px; }
.ohdsi-mark { width: 22px; height: 22px; margin-right: 4px; }
.ohdsi-word { font: 800 24.5px/22px "Open Sans", sans-serif; color: #20445f; letter-spacing: -0.4px; }

/* main */
.main { flex: 1; min-width: 0; display: flex; flex-direction: column; }
.main-scroll { flex: 1; min-height: 0; overflow: hidden; }
.topbar { height: 37px; background: #003246; border-bottom: 1px solid #c5cfd3; }
.page-head { height: 131px; background: #333; }
.page-title { height: 51px; margin: 0; padding: 0 0 6px 11px; display: flex; align-items: center; color: #fff; font-size: 14.2px; font-weight: 600; white-space: nowrap; }
.title-bolt { width: 10px; height: 16px; margin-right: 12px; }
.name-row { display: flex; height: 36px; padding-left: 7px; }
.name-input { width: 666px; background: #fff; border-radius: 2px 0 0 2px; padding-left: 5px; line-height: 38px; font-size: 12.6px; color: #333; white-space: nowrap; }
.nbtn { display: flex; align-items: center; justify-content: center; flex: none; }
.nbtn-save { width: 40px; background: #a3a3a3; }
.nbtn-x { width: 39px; background: #337ab7; border-right: 1px solid #2e6da4; }
.nbtn-copy { width: 44px; background: #337ab7; }
.nbtn-del { width: 5px; background: #d9534f; }
.nic { width: 13px; height: 13px; }
.nic-lg { width: 16px; height: 16px; }
.tabs { display: flex; margin-top: 14px; padding-left: 11px; height: 29px; }
.ptab { background: #808080; color: #c6c6c6; font-size: 12.6px; line-height: 30px; text-align: center; border-radius: 3px 3px 0 0; flex: none; }
.ptab-1 { width: 81px; margin-right: 6px; }
.ptab-2 { width: 101px; margin-right: 6px; }
.ptab-3 { width: 89px; margin-right: 7px; }
.ptab-4 { width: 67px; }
.ptab-on { background: #fff; color: #333; }

.gen-head { display: flex; height: 75px; padding: 10px 0 0 10px; }
.filters { width: 615px; padding-top: 9px; font-size: 12.6px; flex: none; }
.filter-line { display: flex; align-items: center; gap: 3px; height: 24px; white-space: nowrap; }
.filter-line > span:last-child:not(:first-child) { margin-left: 1px; }
.sel { display: flex; align-items: center; height: 23px; border: 1px solid #a9a9a9; border-radius: 1px; padding: 0 6px 0 5px; background: #fff; }
.sel-a { width: 275px; }
.sel-b { width: 274px; padding-left: 5px; }
.sel-text { flex: 1; overflow: hidden; white-space: nowrap; }
.sel-arrow { width: 0; height: 0; border: 3.5px solid transparent; border-top: 7px solid #333; border-bottom: 0; margin-left: 3px; flex: none; }
.gen-actions { display: flex; flex-direction: column; align-items: flex-start; }
.btn { display: inline-flex; align-items: center; background: #337ab7; color: #fff; border: 1px solid #2e6da4; border-bottom-width: 2px; border-radius: 4px; white-space: nowrap; font-size: 12.6px; flex: none; }
.btn-gen { width: 94px; height: 33px; padding-left: 11px; }
.btn-exp { height: 33px; margin-left: 41px; background: #5cb85c; border-color: #4cae4c; padding: 0 12px 0 11px; }
.bic { width: 14px; height: 14px; margin-right: 5px; }
.btn-exp .bic { margin-right: 2px; }
.bic-play { width: 12px; height: 14px; margin-right: 5px; }
.btn-row { height: 33px; }
.btn-rerun { width: 78px; padding-left: 12px; }
.btn-rep { width: 87px; padding-left: 11px; }

.gen-table { table-layout: fixed; border-collapse: collapse; width: 797px; margin: 22px 0 0 2px; font-size: 12.6px; }
.c1 { width: 111px; } .c2 { width: 166px; } .c3 { width: 60px; } .c4 { width: 58px; } .c5 { width: 58px; } .c6 { width: 58px; } .c7 { width: 58px; } .c8 { width: 73px; } .c9 { width: 60px; } .c10 { width: 95px; }
.gen-table th { text-align: left; font-weight: 600; font-size: 12.2px; line-height: 13.5px; padding: 0 0 0 5px; vertical-align: middle; height: 59px; border-bottom: 2px solid #ddd; white-space: nowrap; }
.gen-table small { font-size: 9.4px; font-weight: 600; line-height: 14px; }
.gen-table td { height: 39px; padding: 0 0 0 5px; white-space: nowrap; vertical-align: middle; }
.gen-table td.wrap { white-space: normal; line-height: 30px; }
.row-tall td { height: 65px; }
.row-actions { display: flex; gap: 4px; width: 120px; }
.btn-sliver { width: 8px; height: 33px; background: #d9534f; flex: none; }

.hscroll { height: 16px; flex: none; background: #f1f1f1; display: flex; align-items: center; }
.hthumb { width: 733px; height: 16px; background: #c1c1c1; margin: 0 12px 0 4px; }
.arr { display: block; width: 0; height: 0; flex: none; border: 4px solid transparent; }
.arr-l { border-right: 5px solid #888; border-left: 0; margin-left: 4px; }
.arr-r { border-left: 5px solid #888; border-right: 0; }
.arr-u { border-bottom: 5px solid #666; border-top: 0; }
.arr-d { border-top: 5px solid #999; border-bottom: 0; }
.arr-dark { border-left-color: #333; }

/* devtools */
.devtools { flex: 1; min-width: 0; background: #f3f3f3; border-left: 1px solid #ccc; display: flex; flex-direction: column; font-size: 11.2px; color: #5a5a5a; }
.dt-row { display: flex; align-items: center; border-bottom: 1px solid #ccc; flex: none; white-space: nowrap; }
.dt-tabs { height: 27px; padding-left: 10px; }
.dt-spacer { flex: 1; }
.vsep { display: block; width: 1px; height: 16px; background: #ccc; flex: none; }
.dic { width: 15px; height: 15px; margin-right: 11px; }
.dtab { display: block; height: 100%; padding: 0 12px; line-height: 26px; flex: none; color: #5a5a5a; }
.dt-tabs .vsep-tabs + .dtab { margin-left: 5px; }
.detail-head .dtab, .drawer-tabs .dtab { padding: 0 10px; }
.dtab-on { color: #333; box-shadow: inset 0 -2px 0 #03a9f4; }
.mini { width: 10px; height: 10px; margin-right: 4px; }
.mini-w { margin-left: 7px; }
.cnt { color: #5a5a5a; }
.vsep-cnt { margin: 0 15px 0 4px; }
.dots { width: 4px; height: 14px; margin-right: 22px; }
.dt-close { width: 10px; height: 10px; margin-right: 11px; }

.dt-toolbar { height: 27px; padding-left: 11px; }
.rec { width: 12px; height: 12px; border-radius: 50%; background: #e60000; box-shadow: 0 0 2px #e60000; margin-right: 14px; flex: none; }
.dic-stop { width: 13px; height: 13px; margin-right: 12px; margin-left: 0; }
.vsep-a { margin-right: 11px; }
.dic-vid { width: 14px; height: 10px; margin-right: 14px; }
.dic-flt { width: 14px; height: 12px; margin-right: 14px; }
.dic-srch { width: 14px; height: 14px; margin-right: 11px; }
.vsep-b { margin-right: 9px; }
.tb-text { flex: none; }
.tb-view { margin-right: 12px; }
.dic-list { width: 14px; height: 10px; margin-right: 13px; }
.dic-wf { width: 17px; height: 11px; margin-right: 11px; }
.cb { display: block; width: 11px; height: 11px; border: 1px solid #b5b5b5; border-radius: 2px; background: #f0f0f0; flex: none; }
.cb-on { background: #777; box-shadow: inset 0 0 0 2px #f0f0f0; }
.tb-group { margin-left: 7px; }
.vsep-c { margin: 0 9px 0 10px; }
.tb-pres { margin-left: 8px; }
.cb-3 { margin-left: 11px; }
.tb-dis { margin-left: 7px; }
.vsep-d { margin: 0 11px 0 10px; }
.tb-off { margin-left: 7px; }
.tb-on { margin-left: 9px; }
.tri { display: block; width: 0; height: 0; border: 4px solid transparent; border-top: 6px solid #666; border-bottom: 0; flex: none; }
.tri-on { margin-left: 26px; }

.dt-filter { height: 25px; padding-left: 5px; }
.flt-input { width: 163px; height: 18px; background: #fff; line-height: 20px; padding-left: 3px; color: #777; margin-right: 13px; }
.cb-5 { margin-right: 7px; }
.ft-text { color: #333; }
.ft-hide { margin-right: 7px; }
.pill { width: 19px; height: 22px; border-radius: 6px; background: #a8a8a8; color: #fff; text-align: center; line-height: 22px; margin-right: 5px; flex: none; }
.vsep-e { margin-right: 6px; }
.ft-x { margin-right: 11px; }

.overview { flex: none; height: 81px; background: #fff; border-bottom: 1px solid #ccc; }
.ov-svg { width: 924px; height: 80px; margin-left: -1px; }
.ov-grid path { stroke: #ddd; fill: none; }
.ov-labels text { font: 9.4px "Open Sans", sans-serif; fill: #333; text-anchor: end; }
.ov-a path { stroke: #03a9f4; fill: none; }
.ov-b path { stroke: #1abc9c; fill: none; }
.ov-c path { stroke: #00c853; fill: none; }

.net { flex: none; height: 624px; display: flex; }
.net-list { width: 422px; flex: none; border-right: 1px solid #ccc; display: flex; flex-direction: column; }
.net-head { height: 27px; line-height: 26px; padding-left: 5px; border-bottom: 1px solid #ccc; flex: none; color: #333; }
.net-body { flex: 1; min-height: 0; display: flex; }
.rows { width: 405px; flex: none; overflow: hidden; display: flex; flex-direction: column; justify-content: flex-end; background: #fff; font-size: 11.3px; }
.rq { height: 21px; flex: none; display: flex; align-items: center; padding-left: 6px; padding-bottom: 1px; color: #333; background: #fff; }
.rq .fi { margin-top: 1px; }
.rq-g { background: #f5f5f5; }
.rq-sel { background: #2196f3; color: #fff; }
.fi { display: block; width: 12px; height: 15px; border: 1px solid #999; background: #fff; margin-right: 5px; flex: none; }
.vscroll { background: #f5f5f5; display: flex; flex-direction: column; align-items: center; }
.vscroll-net { width: 16px; padding: 6px 0 5px; }
.vscroll .arr-d { margin-top: 8px; }
.vthumb { display: block; width: 13px; background: #c1c1c1; }
.vthumb-net { height: 17px; margin-top: auto; }
.net-detail { flex: 1; min-width: 0; display: flex; flex-direction: column; background: #fff; }
.detail-head { height: 27px; display: flex; align-items: center; padding-left: 9px; background: #f3f3f3; border-bottom: 1px solid #ccc; flex: none; }
.det-x { width: 10px; height: 10px; margin-right: 5px; }
.code { flex: 1; min-height: 0; display: flex; }
.gutter { width: 33px; flex: none; border-right: 1px solid #ddd; text-align: right; padding: 4px 4px 0 0; font: 11px "Liberation Mono", monospace; color: #888; background: #fff; }
.code-body { flex: 1; min-width: 0; display: flex; flex-direction: column; }
.code-line { flex: 1; padding: 4px 0 0 4px; font: 12.5px "Liberation Mono", monospace; color: #333; white-space: nowrap; overflow: hidden; }
.s { color: #c41a16; }
.k { color: #0d22aa; }
.code-hs { height: 17px; flex: none; background: #f0f0f0; display: flex; align-items: center; }
.code-thumb { width: 17px; height: 14px; background: #c1c1c1; margin-left: 6px; margin-right: auto; }
.code-hs .arr-r { margin-right: 3px; }

.status { flex: none; height: 27px; display: flex; border-bottom: 1px solid #ccc; border-top: 1px solid #ccc; white-space: nowrap; }
.status-l { width: 422px; border-right: 1px solid #ccc; display: flex; align-items: center; padding-left: 6px; gap: 6px; }
.st-sep { display: block; width: 1px; height: 10px; background: #aaa; }
.st-sep-o { background: #d9a066; }
.st-blue { color: #1a73e8; }
.status-r { flex: 1; background: #eee; line-height: 25px; padding-left: 7px; }

.drawer-tabs { flex: none; height: 27px; display: flex; align-items: center; padding-left: 16px; border-bottom: 1px solid #ccc; }
.dots-d { margin-right: 8px; }
.drawer-bar { flex: none; height: 27px; display: flex; align-items: center; padding-left: 8px; border-bottom: 1px solid #ccc; white-space: nowrap; }
.dic-side { width: 16px; height: 14px; margin-right: 14px; }
.dic-stop2 { width: 13px; height: 13px; margin-right: 12px; }
.vsep-f { margin-right: 9px; }
.tri-top { margin-left: 100px; }
.vsep-g { margin-left: 9px; margin-right: 10px; }
.dic-eye { width: 16px; height: 11px; margin-right: 10px; }
.vsep-h { margin-right: 7px; }
.con-input { width: 191px; height: 20px; background: #fff; line-height: 20px; padding-left: 6px; color: #777; margin-right: 9px; flex: none; }
.tri-lvl { margin-left: 5px; }
.vsep-i { margin-right: 10px; }
.tb-hid { color: #999; margin-right: 12px; }
.dic-gear { width: 14px; height: 14px; margin-right: 9px; }

.console { flex: 1; min-height: 0; display: flex; background: #fff; }
.con-msgs { flex: 1; min-width: 0; font: 11px "Liberation Mono", monospace; }
.msg { height: 20px; background: #fff0f0; border-bottom: 1px solid #ffd6d6; display: flex; align-items: center; padding-left: 8px; color: #f00; white-space: nowrap; }
.msg-first { height: 14px; align-items: flex-end; overflow: hidden; }
.err { width: 9px; height: 9px; margin-right: 8px; }
.msg-first .err { margin-bottom: 3px; }
.msg-text { flex: 1; color: #f00; }
.msg-ooops { padding-left: 1px; }
.u { text-decoration: underline; color: #545454; }
.msg-src { color: #545454; text-decoration: underline; padding-right: 29px; }
.tri-r { display: block; width: 0; height: 0; border: 3.5px solid transparent; border-left: 5px solid #666; border-right: 0; margin-right: 1px; flex: none; }
.prompt { padding: 6px 0 0 10px; }
.prompt-ic { width: 6px; height: 8px; }
.vscroll-con { width: 16px; flex: none; padding: 6px 0 3px; }
.vthumb-con { height: 17px; margin-top: auto; }
```
